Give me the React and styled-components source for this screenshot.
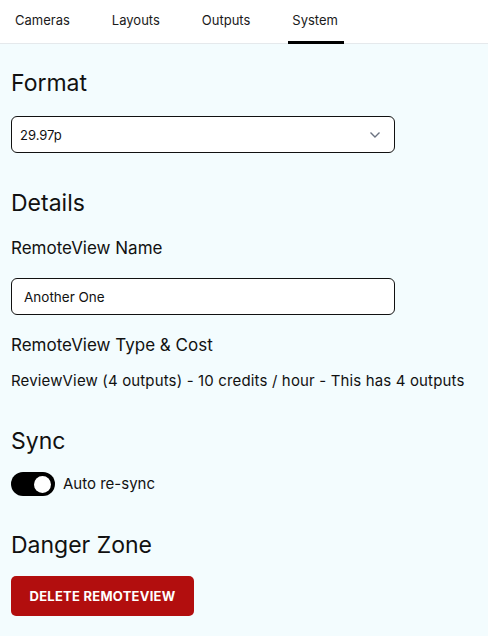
import React, { useState } from "react";
import styled, { createGlobalStyle } from "styled-components";

const Global = createGlobalStyle`
  html, body { margin: 0; padding: 0; background: #f3fcfe; }
  body { font-family: Inter, "Noto Sans", sans-serif; color: #111; }
  * { box-sizing: border-box; }
`;

const Page = styled.div`
  width: 488px;
  min-height: 636px;
  background: #f3fcfe;
`;

const TabBar = styled.nav`
  display: flex;
  gap: 42px;
  height: 44px;
  background: #fff;
  border-bottom: 1px solid #e5e9ec;
  padding-left: 15px;
`;

const Tab = styled.div`
  position: relative;
  display: flex;
  align-items: center;
  font-size: 13px;
  color: #1a1a1a;
  padding-bottom: 4px;
  &::after {
    content: "";
    display: ${(p) => (p.$active ? "block" : "none")};
    position: absolute;
    left: -4px;
    right: -6px;
    bottom: -1px;
    height: 3px;
    background: #000;
  }
`;

const Content = styled.main`
  padding: 25px 11px 20px 11px;
  display: flex;
  flex-direction: column;
`;

const Heading = styled.h2`
  margin: 0;
  font-size: 23px;
  font-weight: 400;
  line-height: 28px;
  color: #111;
  margin-top: ${(p) => p.$mt || 0}px;
`;

const Label = styled.div`
  font-size: 17px;
  line-height: 24px;
  color: #111;
  margin-top: ${(p) => p.$mt || 0}px;
`;

const Text = styled.div`
  font-size: 15px;
  line-height: 20px;
  letter-spacing: 0.15px;
  color: #111;
  margin-top: ${(p) => p.$mt || 0}px;
`;

const SelectBox = styled.div`
  width: 384px;
  height: 37px;
  margin-top: ${(p) => p.$mt || 0}px;
  border: 1px solid #111;
  border-radius: 6px;
  background: #fff;
  display: flex;
  align-items: center;
  justify-content: space-between;
  padding: 0 13px 0 8px;
  font-size: 13px;
`;

const Input = styled.input`
  width: 384px;
  height: 37px;
  margin-top: ${(p) => p.$mt || 0}px;
  border: 1px solid #111;
  border-radius: 6px;
  background: #fff;
  padding: 0 12px;
  font-family: inherit;
  font-size: 13.5px;
  color: #111;
  outline: none;
`;

const ToggleRow = styled.label`
  display: flex;
  align-items: center;
  gap: 8px;
  margin-top: ${(p) => p.$mt || 0}px;
  font-size: 15px;
  line-height: 24px;
`;

const Track = styled.span`
  width: 44px;
  height: 24px;
  border-radius: 12px;
  background: ${(p) => (p.$on ? "#000" : "#bbb")};
  display: flex;
  align-items: center;
  padding: 0 4px;
  justify-content: ${(p) => (p.$on ? "flex-end" : "flex-start")};
`;

const Knob = styled.span`
  width: 17px;
  height: 17px;
  border-radius: 50%;
  background: #fff;
`;

const DangerButton = styled.button`
  align-self: flex-start;
  margin-top: ${(p) => p.$mt || 0}px;
  width: 183px;
  height: 40px;
  border: none;
  border-radius: 5px;
  background: #b20e0e;
  color: #fff;
  font-family: inherit;
  font-weight: 700;
  font-size: 13px;
  letter-spacing: 0.25px;
  text-transform: uppercase;
  cursor: pointer;
`;

const Chevron = () => (
  <svg width="12" height="8" viewBox="0 0 12 8" fill="none">
    <path d="M1.5 1.5L6 6l4.5-4.5" stroke="#6b7280" strokeWidth="1.4" />
  </svg>
);

export default function App() {
  const [on, setOn] = useState(true);
  return (
    <Page>
      <Global />
      <TabBar>
        <Tab>Cameras</Tab>
        <Tab>Layouts</Tab>
        <Tab>Outputs</Tab>
        <Tab $active>System</Tab>
      </TabBar>
      <Content>
        <Heading>Format</Heading>
        <SelectBox $mt={19}>
          <span>29.97p</span>
          <Chevron />
        </SelectBox>
        <Heading $mt={36}>Details</Heading>
        <Label $mt={19}>RemoteView Name</Label>
        <Input $mt={18} defaultValue="Another One" />
        <Label $mt={18}>RemoteView Type &amp; Cost</Label>
        <Text $mt={14}>ReviewView (4 outputs) - 10 credits / hour - This has 4 outputs</Text>
        <Heading $mt={36}>Sync</Heading>
        <ToggleRow $mt={17} onClick={() => setOn(!on)}>
          <Track $on={on}>
            <Knob />
          </Track>
          Auto re-sync
        </ToggleRow>
        <Heading $mt={35}>Danger Zone</Heading>
        <DangerButton $mt={17}>Delete RemoteView</DangerButton>
      </Content>
    </Page>
  );
}
